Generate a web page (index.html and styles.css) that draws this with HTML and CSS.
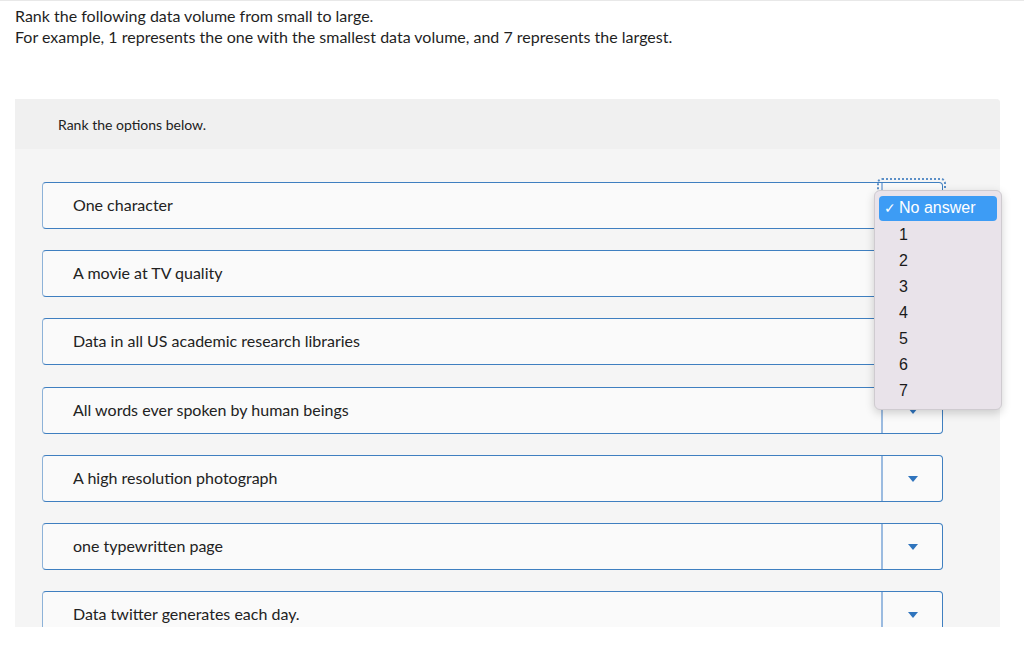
FILE: index.html
```html
<!DOCTYPE html>
<html>
<head>
<meta charset="utf-8">
<link rel="stylesheet" href="styles.css">
</head>
<body>
<div class="page">
  <div class="intro">
    <p>Rank the following data volume from small to large.</p>
    <p>For example, 1 represents the one with the smallest data volume, and 7 represents the largest.</p>
  </div>
  <div class="question">
    <div class="q-head">Rank the options below.</div>
    <div class="q-body">
      <div class="row"><div class="label">One character</div><div class="sel focused"><span class="arrow"></span></div></div>
      <div class="row"><div class="label">A movie at TV quality</div><div class="sel"><span class="arrow"></span></div></div>
      <div class="row"><div class="label">Data in all US academic research libraries</div><div class="sel"><span class="arrow"></span></div></div>
      <div class="row"><div class="label">All words ever spoken by human beings</div><div class="sel"><span class="arrow"></span></div></div>
      <div class="row"><div class="label">A high resolution photograph</div><div class="sel"><span class="arrow"></span></div></div>
      <div class="row"><div class="label">one typewritten page</div><div class="sel"><span class="arrow"></span></div></div>
      <div class="row"><div class="label">Data twitter generates each day.</div><div class="sel"><span class="arrow"></span></div></div>
    </div>
  </div>
</div>
<div class="popup">
  <div class="opt active"><span class="check">✓</span>No answer</div>
  <div class="opt">1</div>
  <div class="opt">2</div>
  <div class="opt">3</div>
  <div class="opt">4</div>
  <div class="opt">5</div>
  <div class="opt">6</div>
  <div class="opt">7</div>
</div>
</body>
</html>
```
FILE: styles.css
```css
html, body {
  margin: 0;
  padding: 0;
  background: #ffffff;
}
body {
  font-family: Lato, "Open Sans", sans-serif;
  color: #222;
  height: 645px;
  overflow: hidden;
  position: relative;
}
.page {
  border-top: 1px solid #e8e8e8;
}
.intro {
  padding: 4px 0 0 15px;
  height: 98px;
  box-sizing: border-box;
}
.intro p {
  margin: 0;
  font-size: 16px;
  line-height: 21px;
  color: #1f1f1f;
}
.question {
  margin-left: 15px;
  width: 985px;
  height: 528px;
  overflow: hidden;
  background: #f5f5f5;
  border-top-right-radius: 4px;
}
.q-head {
  height: 50px;
  background: #f0f0f0;
  padding-left: 43px;
  display: flex;
  align-items: center;
  font-size: 14px;
  color: #222;
}
.q-body {
  padding: 33px 0 0 27px;
  display: flex;
  flex-direction: column;
  gap: 21.2px;
}
.row {
  width: 901px;
  height: 47px;
  box-sizing: border-box;
  border: 1px solid #3f7fc0;
  border-left-color: #8db2d8;
  border-radius: 4px;
  background: #fafafa;
  display: flex;
  align-items: stretch;
}
.label {
  flex: 1;
  padding-left: 30px;
  display: flex;
  align-items: center;
  font-size: 16px;
  color: #222;
  padding-bottom: 2px;
}
.sel {
  width: 59px;
  border-left: 2px solid #9bbbe0;
  display: flex;
  align-items: center;
  justify-content: center;
  position: relative;
}
.arrow {
  width: 0;
  height: 0;
  border-left: 5px solid transparent;
  border-right: 5px solid transparent;
  border-top: 6px solid #2f74bd;
  margin-top: 1px;
}
.focused::before {
  content: "";
  position: absolute;
  left: -6px;
  right: -4px;
  top: -5px;
  bottom: -5px;
  border: 2px dotted #5b8fc7;
  border-radius: 5px;
}
.popup {
  position: absolute;
  left: 874px;
  top: 190px;
  width: 128px;
  height: 220px;
  box-sizing: border-box;
  background: #e9e3ea;
  border: 1px solid #cfcbd0;
  border-radius: 6px;
  box-shadow: 0 3px 10px rgba(0,0,0,0.18);
  padding: 5px 4px;
  font-family: "Liberation Sans", Arial, sans-serif;
}
.opt {
  height: 26px;
  line-height: 26px;
  font-size: 16px;
  color: #1a1a1a;
  padding-left: 20px;
}
.opt.active {
  height: 25px;
  line-height: 24px;
  margin-bottom: 1px;
  background: #3d9cf5;
  color: #fff;
  border-radius: 4px;
  padding-left: 5px;
  font-size: 16px;
}
.check {
  display: inline-block;
  width: 15px;
  font-size: 14px;
}
```
